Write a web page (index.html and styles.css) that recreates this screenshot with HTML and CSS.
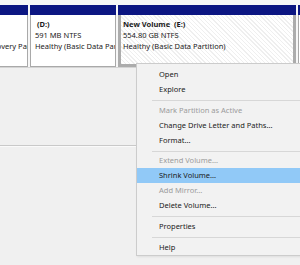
FILE: index.html
```html
<!DOCTYPE html>
<html>
<head>
<meta charset="utf-8">
<link rel="stylesheet" href="styles.css">
</head>
<body>
<div class="screen">
  <div class="disk">
    <div class="parts">
      <div class="part p1">
        <div class="bar"></div>
        <div class="body">
          <div class="txt shifted">
            <div class="l">&nbsp;</div>
            <div class="l">529 MB</div>
            <div class="l">Healthy (Recovery Partition)</div>
          </div>
        </div>
      </div>
      <div class="part p2">
        <div class="bar"></div>
        <div class="body">
          <div class="txt">
            <div class="l b">&nbsp;(D:)</div>
            <div class="l">591 MB NTFS</div>
            <div class="l">Healthy (Basic Data Partition)</div>
          </div>
        </div>
      </div>
      <div class="part p3 selected">
        <div class="bar"></div>
        <div class="body">
          <div class="txt">
            <div class="l b">New Volume&nbsp; (E:)</div>
            <div class="l">554.80 GB NTFS</div>
            <div class="l">Healthy (Basic Data Partition)</div>
          </div>
        </div>
      </div>
      <div class="part p4">
        <div class="bar"></div>
        <div class="body"></div>
      </div>
    </div>
  </div>

  <div class="menu">
    <div class="item">Open</div>
    <div class="item">Explore</div>
    <div class="sep"></div>
    <div class="item disabled">Mark Partition as Active</div>
    <div class="item">Change Drive Letter and Paths...</div>
    <div class="item">Format...</div>
    <div class="sep s5"></div>
    <div class="item disabled">Extend Volume...</div>
    <div class="item active">Shrink Volume...</div>
    <div class="item disabled">Add Mirror...</div>
    <div class="item">Delete Volume...</div>
    <div class="sep"></div>
    <div class="item">Properties</div>
    <div class="sep"></div>
    <div class="item">Help</div>
  </div>
</div>
</body>
</html>
```

FILE: styles.css
```css
html, body {
  margin: 0;
  padding: 0;
}

body {
  width: 300px;
  height: 265px;
  overflow: hidden;
  background: #f0f0f0;
  font-family: "Noto Sans", "Open Sans", sans-serif;
  font-size: 7.5px;
  color: #1a1a1a;
}

.screen {
  position: relative;
  width: 300px;
  height: 265px;
  overflow: hidden;
}

.disk {
  height: 145px;
  border-bottom: 1px solid #c9c9c9;
  box-shadow: 0 1px 0 #fafafa;
}

.parts {
  display: flex;
  gap: 2px;
  padding-top: 5px;
  height: 62px;
  border-bottom: 1px solid #d4d4d4;
  background: #f7f7f7;
}

.part {
  display: flex;
  flex-direction: column;
  flex: none;
}

.bar {
  height: 10px;
  background: #0c1682;
  flex: none;
}

.body {
  flex: 1;
  background: #ffffff;
  border: 1px solid #a9a9a9;
  border-top: none;
  overflow: hidden;
  padding: 4px 0 0 4px;
  white-space: nowrap;
}

.l {
  height: 11px;
  line-height: 11px;
}

.b {
  font-weight: bold;
}

.p1 {
  width: 28px;
}

.p1 .body {
  padding-left: 0;
  border-left: none;
}

.shifted {
  margin-left: -47px;
}

.p2 {
  width: 86px;
}

.p3 {
  width: 178px;
}

.selected .body {
  border: 3px solid #acacac;
  border-top: none;
  padding-left: 2px;
  background-color: #ffffff;
  background-image: repeating-linear-gradient(45deg, #efefef 0 1px, transparent 1px 3px);
}

.p4 {
  width: 10px;
}

.menu {
  position: absolute;
  left: 136px;
  top: 63px;
  width: 200px;
  background: #f2f2f2;
  border: 1px solid #cccccc;
  padding: 3px 0 0 0;
  box-shadow: 1px 1px 2px rgba(0, 0, 0, 0.08);
}

.item {
  height: 15px;
  line-height: 15px;
  padding-left: 22px;
  color: #1a1a1a;
  white-space: nowrap;
}

.item.disabled {
  color: #9b9b9b;
}

.item.active {
  background: #91c9f7;
}

.sep {
  height: 6px;
  position: relative;
}

.sep.s5 {
  height: 5px;
}

.sep::after {
  content: "";
  display: block;
  margin-left: 15px;
  border-top: 1px solid #d7d7d7;
  position: relative;
  top: 3px;
}
```
